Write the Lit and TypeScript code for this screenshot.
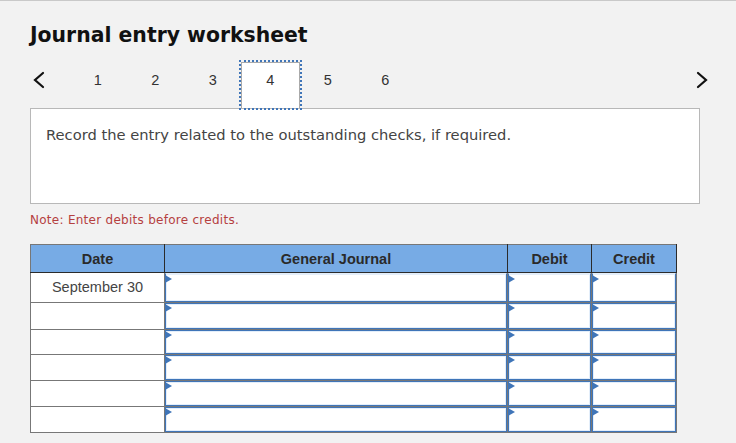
import { LitElement, html, css } from 'lit';
import { customElement } from 'lit/decorators.js';

const TABS = ['1', '2', '3', '4', '5', '6'];
const ACTIVE_TAB = '4';
const ROWS = [
  { date: 'September 30', height: 30 },
  { date: '', height: 27 },
  { date: '', height: 25 },
  { date: '', height: 26 },
  { date: '', height: 26 },
  { date: '', height: 26 },
];

@customElement('app-root')
export class AppRoot extends LitElement {
  static styles = css`
    :host {
      display: block;
      width: 736px;
      height: 443px;
      box-sizing: border-box;
      overflow: hidden;
      background: #f2f2f2;
      border-top: 1px solid #c9c9c9;
      padding: 0 36px 0 30px;
      font-family: 'Liberation Sans', Arial, sans-serif;
      color: #222;
    }

    h1 {
      margin: 0;
      padding-top: 22px;
      height: 39px;
      font: bold 20.4px/25px 'DejaVu Sans', Verdana, sans-serif;
      color: #111;
    }

    .nav {
      display: flex;
      align-items: flex-start;
      height: 46px;
      position: relative;
      z-index: 1;
    }

    .arrow {
      width: 39px;
      height: 36px;
      display: flex;
      align-items: center;
    }

    .arrow svg {
      display: block;
    }

    .arrow.next {
      margin-left: auto;
      margin-right: -11px;
      width: auto;
    }

    .tab {
      width: 57.5px;
      height: 46px;
      box-sizing: border-box;
      display: flex;
      align-items: center;
      justify-content: center;
      font-size: 14.5px;
      color: #333;
      padding-bottom: 10px;
    }

    .tab.active {
      background: #fff;
      outline: 2px dotted #3f75b8;
      border: 1px solid #aaa;
      border-bottom: none;
      width: 59px;
      margin: 0 -0.75px;
      padding-bottom: 12px;
    }

    .panel {
      height: 96px;
      box-sizing: border-box;
      background: #fff;
      border: 1px solid #b8b8b8;
      padding: 16px 15px;
      font: 14.7px/20px 'DejaVu Sans', Verdana, sans-serif;
      color: #444;
    }

    .note {
      margin: 0;
      height: 40px;
      padding-top: 9px;
      box-sizing: border-box;
      font: 12px/15px 'DejaVu Sans', Verdana, sans-serif;
      letter-spacing: 0.27px;
      color: #b5403f;
    }

    table {
      width: 646px;
      table-layout: fixed;
      border-collapse: collapse;
      background: #fff;
    }

    col.date { width: 134px; }
    col.journal { width: 343px; }
    col.debit { width: 84px; }
    col.credit { width: 85px; }

    th {
      height: 28px;
      padding: 0;
      box-sizing: border-box;
      background: #77abe5;
      border: 1px solid #2b2b2b;
      border-top-color: #777;
      border-left-color: #777;
      font-size: 14.5px;
      font-weight: bold;
      color: #2a2a2a;
    }

    th + th { border-left-color: #2b2b2b; }

    td {
      padding: 0 0 2px;
      box-sizing: border-box;
      border: 1px solid #777;
      font-size: 14.5px;
      text-align: center;
      color: #444;
    }

    td.input {
      height: 1px;
      padding: 0;
    }

    tr.strong td.input { border-top-color: #3f75b8; }

    .entry {
      position: relative;
      box-sizing: border-box;
      height: 100%;
      background: #fff;
      border: 1px solid #3f75b8;
      box-shadow: inset 0 0 0 1px #e3eefa;
    }

    tr:first-child .entry { border-top-color: #e3eefa; }

    .entry::after {
      content: '';
      position: absolute;
      left: -1px;
      top: 0;
      border-left: 7px solid #3f75b8;
      border-top: 4px solid transparent;
      border-bottom: 4px solid transparent;
    }

    tr:first-child .entry::after { top: 1px; }
  `;

  chevron(points: string) {
    return html`<svg width="16" height="20" viewBox="0 0 16 20" fill="none">
      <polyline points=${points} stroke="#111" stroke-width="2.2" stroke-linecap="round" />
    </svg>`;
  }

  render() {
    return html`
      <h1>Journal entry worksheet</h1>
      <div class="nav">
        <div class="arrow">${this.chevron('13,3 5,10 13,17')}</div>
        ${TABS.map(t => html`<div class="tab ${t === ACTIVE_TAB ? 'active' : ''}">${t}</div>`)}
        <div class="arrow next">${this.chevron('3,3 11,10 3,17')}</div>
      </div>
      <div class="panel">Record the entry related to the outstanding checks, if required.</div>
      <p class="note">Note: Enter debits before credits.</p>
      <table>
        <colgroup>
          <col class="date" /><col class="journal" /><col class="debit" /><col class="credit" />
        </colgroup>
        <thead>
          <tr><th>Date</th><th>General Journal</th><th>Debit</th><th>Credit</th></tr>
        </thead>
        <tbody>
          ${ROWS.map((row, i) => html`
            <tr class=${i === 2 ? 'strong' : ''} style="height: ${row.height}px">
              <td>${row.date}</td>
              <td class="input"><div class="entry"></div></td>
              <td class="input"><div class="entry"></div></td>
              <td class="input"><div class="entry"></div></td>
            </tr>
          `)}
        </tbody>
      </table>
    `;
  }
}
